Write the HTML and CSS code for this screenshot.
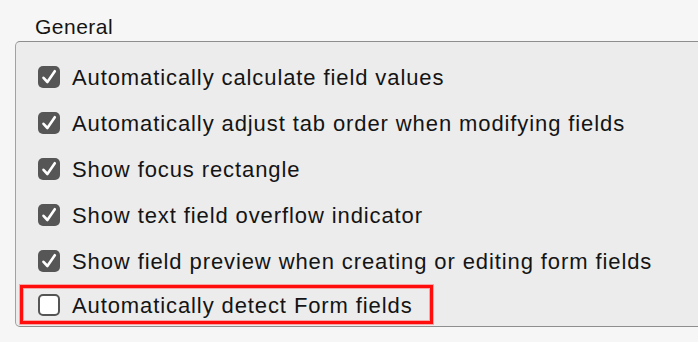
FILE: index.html
```html
<!DOCTYPE html>
<html>
<head>
<meta charset="utf-8">
<link rel="stylesheet" href="styles.css">
</head>
<body>
<div class="legend">General</div>
<div class="group">
  <div class="row"><span class="cb on"><svg viewBox="0 0 22 22"><path d="M5.5 11.8 L9.4 16 L16.8 5.2" /></svg></span><span class="label">Automatically calculate field values</span></div>
  <div class="row"><span class="cb on"><svg viewBox="0 0 22 22"><path d="M5.5 11.8 L9.4 16 L16.8 5.2" /></svg></span><span class="label">Automatically adjust tab order when modifying fields</span></div>
  <div class="row"><span class="cb on"><svg viewBox="0 0 22 22"><path d="M5.5 11.8 L9.4 16 L16.8 5.2" /></svg></span><span class="label">Show focus rectangle</span></div>
  <div class="row"><span class="cb on"><svg viewBox="0 0 22 22"><path d="M5.5 11.8 L9.4 16 L16.8 5.2" /></svg></span><span class="label">Show text field overflow indicator</span></div>
  <div class="row"><span class="cb on"><svg viewBox="0 0 22 22"><path d="M5.5 11.8 L9.4 16 L16.8 5.2" /></svg></span><span class="label">Show field preview when creating or editing form fields</span></div>
  <div class="row highlight"><span class="cb off"></span><span class="label">Automatically detect Form fields</span></div>
</div>
</body>
</html>
```
FILE: styles.css
```css
html, body {
  margin: 0;
  padding: 0;
  background: #f6f6f6;
  font-family: "Liberation Sans", Arial, sans-serif;
  color: #141414;
  overflow: hidden;
}
.legend {
  font-size: 21px;
  letter-spacing: 0.5px;
  height: 41px;
  line-height: 22px;
  padding-left: 35px;
  padding-top: 16px;
  box-sizing: border-box;
}
.group {
  margin-left: 15px;
  height: 286px;
  box-sizing: border-box;
  border: 1px solid #a2a2a2;
  border-top-color: #8e8e8e;
  border-bottom-color: #8e8e8e;
  border-right: none;
  border-radius: 5px 0 0 5px;
  background: #ececec;
  padding-top: 12px;
}
.row {
  display: flex;
  align-items: center;
  height: 46px;
  padding-left: 22px;
}
.cb {
  width: 22px;
  height: 22px;
  border-radius: 5px;
  box-sizing: border-box;
  flex: none;
  display: flex;
}
.cb.on {
  background: #565656;
}
.cb.on svg {
  width: 22px;
  height: 22px;
}
.cb.on path {
  fill: none;
  stroke: #ffffff;
  stroke-width: 2.6;
  stroke-linecap: round;
  stroke-linejoin: round;
}
.cb.off {
  background: #ffffff;
  border: 2px solid #555555;
}
.label {
  font-size: 22px;
  letter-spacing: 0.9px;
  margin-left: 12px;
  white-space: nowrap;
  line-height: 26px;
  padding-top: 2px;
}
.highlight {
  height: 39px;
  width: 413px;
  box-sizing: border-box;
  margin-left: 4px;
  margin-top: 1px;
  padding-left: 15px;
  border: 3px solid #ff0d0d;
  box-shadow: 0 0 0 1px rgba(255, 110, 110, 0.55), inset 0 0 0 1px rgba(255, 110, 110, 0.55);
}
```
